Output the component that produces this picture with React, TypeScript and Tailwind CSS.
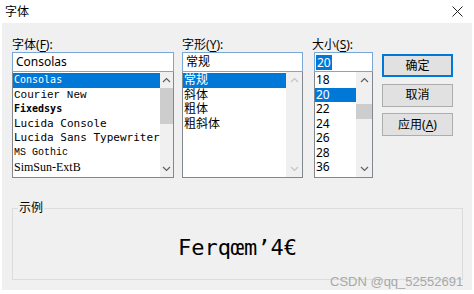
import React from 'react'

const ui = "font-['Noto_Sans','Noto_Sans_CJK_SC',sans-serif]"

function Chevron({ up, dim }: { up?: boolean; dim?: boolean }) {
    return (
        <svg width="9" height="6" viewBox="0 0 9 6">
            <path
                d={up ? 'M1 5 L4.5 1.5 L8 5' : 'M1 1 L4.5 4.5 L8 1'}
                fill="none"
                stroke={dim ? '#c4c4c4' : '#606060'}
                strokeWidth="1.2"
            />
        </svg>
    )
}

function ScrollBar({ thumbTop, thumbH, dim }: { thumbTop?: number; thumbH?: number; dim?: boolean }) {
    return (
        <div className="w-[16px] h-full flex flex-col bg-[#f0f0f0]">
            <div className="h-[16px] flex items-center justify-center">
                <Chevron up dim={dim} />
            </div>
            <div className="flex-1">
                {thumbH ? (
                    <div className="bg-[#cdcdcd] w-full" style={{ marginTop: thumbTop, height: thumbH }} />
                ) : null}
            </div>
            <div className="h-[16px] flex items-center justify-center">
                <Chevron dim={dim} />
            </div>
        </div>
    )
}

function Label({ text, k }: { text: string; k: string }) {
    return (
        <div className={`h-[15px] text-[12px] leading-[15px] text-black ${ui}`}>
            {text}(<span className="underline underline-offset-2">{k}</span>):
        </div>
    )
}

const fonts = [
    { name: 'Consolas', cls: "font-['DejaVu_Sans_Mono',monospace] text-[10px]" },
    { name: 'Courier New', cls: "font-['Liberation_Mono',monospace] text-[11px]" },
    { name: 'Fixedsys', cls: "font-['DejaVu_Sans_Mono',monospace] text-[10px] font-bold" },
    { name: 'Lucida Console', cls: "font-['DejaVu_Sans_Mono',monospace] text-[11px]" },
    { name: 'Lucida Sans Typewriter', cls: "font-['DejaVu_Sans_Mono',monospace] text-[11px]" },
    { name: 'MS Gothic', cls: "font-['Liberation_Mono',monospace] text-[10px]" },
    { name: 'SimSun-ExtB', cls: "font-['Liberation_Serif',serif] text-[12px] text-[#707070]" },
]

const styles = ['常规', '斜体', '粗体', '粗斜体']
const sizes = ['18', '20', '22', '24', '26', '28', '36']

export default function App(): JSX.Element {
    return (
        <div className={`w-[474px] h-[294px] bg-white relative overflow-hidden ${ui}`}>
            <div className="h-[23px] flex items-center justify-between pl-[5px] pr-[11px]">
                <span className="text-[12px] text-black">字体</span>
                <svg width="11" height="11" viewBox="0 0 11 11">
                    <path d="M0.5 0.5 L10.5 10.5 M10.5 0.5 L0.5 10.5" stroke="#222" strokeWidth="1" />
                </svg>
            </div>
            <div className="ml-[2px] w-[470px] h-[267px] bg-[#f0f0f0] pt-[14px] px-[10px]">
                <div className="flex">
                    <div className="w-[162px]">
                        <Label text="字体" k="F" />
                        <div className="h-[20px] border border-[#7aa7d6] bg-white flex items-center px-[3px] text-[12px]">
                            Consolas
                        </div>
                        <div className="h-[106px] border border-t-0 border-[#828790] bg-white flex">
                            <div className="flex-1 pt-[1px]">
                                {fonts.map((f, i) => (
                                    <div
                                        key={f.name}
                                        className={`h-[14.5px] leading-[14.5px] pl-[1px] whitespace-nowrap ${f.cls} ${i === 0 ? 'bg-[#0078d7] text-white' : 'text-black'}`}
                                    >
                                        {f.name}
                                    </div>
                                ))}
                            </div>
                            <ScrollBar thumbTop={0} thumbH={36} />
                        </div>
                    </div>
                    <div className="w-[121px] ml-[8px]">
                        <Label text="字形" k="Y" />
                        <div className="h-[20px] border border-[#7aa7d6] bg-white flex items-center px-[3px] text-[12px]">
                            常规
                        </div>
                        <div className="h-[106px] border border-t-0 border-[#828790] bg-white flex">
                            <div className="flex-1 pt-[1px]">
                                {styles.map((s, i) => (
                                    <div
                                        key={s}
                                        className={`h-[14.5px] leading-[14.5px] pl-[1px] text-[12px] ${i === 0 ? 'bg-[#0078d7] text-white' : 'text-black'}`}
                                    >
                                        {s}
                                    </div>
                                ))}
                            </div>
                            <ScrollBar dim />
                        </div>
                    </div>
                    <div className="w-[59px] ml-[11px]">
                        <div className="-ml-[2px]">
                            <Label text="大小" k="S" />
                        </div>
                        <div className="h-[20px] border border-[#7aa7d6] bg-white flex items-center px-[1px] text-[12px]">
                            <span className="bg-[#0078d7] text-white px-[1px] leading-[15px]">20</span>
                        </div>
                        <div className="h-[106px] border border-t-0 border-[#828790] bg-white flex">
                            <div className="flex-1 pt-[1px]">
                                {sizes.map((s, i) => (
                                    <div
                                        key={s}
                                        className={`h-[14.5px] leading-[14.5px] pl-[1px] text-[12px] ${i === 1 ? 'bg-[#0078d7] text-white' : 'text-black'}`}
                                    >
                                        {s}
                                    </div>
                                ))}
                            </div>
                            <ScrollBar thumbTop={16} thumbH={15} />
                        </div>
                    </div>
                    <div className="w-[71px] ml-[9px] pt-[17px] flex flex-col gap-[6.5px]">
                        <button className="h-[23px] bg-[#e1e1e1] border-2 border-[#0078d7] text-[12px] text-black">
                            确定
                        </button>
                        <button className="h-[23px] bg-[#e1e1e1] border border-[#adadad] text-[12px] text-black">
                            取消
                        </button>
                        <button className="h-[23px] bg-[#e1e1e1] border border-[#adadad] text-[12px] text-black">
                            应用(<span className="underline underline-offset-2">A</span>)
                        </button>
                    </div>
                </div>
                <fieldset className="mt-[23px] w-[451px] h-[79px] border border-[#dcdcdc] px-[5px]">
                    <legend className="text-[12px] leading-[14px] text-black px-px">示例</legend>
                    <div className="h-[58px] flex items-center justify-center pt-[6px]">
                        <span className="font-['DejaVu_Sans_Mono',monospace] text-[22px] text-black">Ferqœm’4€</span>
                    </div>
                </fieldset>
            </div>
            <div className="absolute left-[330px] top-[272px] text-[13px] text-[#a8a8a8] font-['Liberation_Sans',sans-serif]">
                CSDN @qq_52552691
            </div>
        </div>
    )
}
